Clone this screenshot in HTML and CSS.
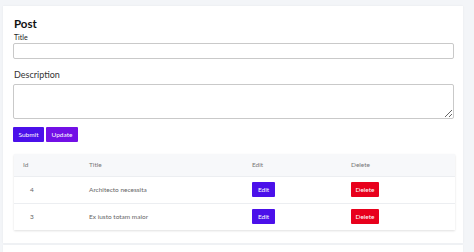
FILE: index.html
```html
<html>
  <head>
    <title>Posts</title>
    <link rel="stylesheet" href="styles.css">
  </head>
  <body>
    <div class="card">
      <h2>Post</h2>
      <form class="post-form">
        <label class="small-label">Title</label>
        <input type="text" class="field">
        <label class="big-label">Description</label>
        <textarea class="field area"></textarea>
        <div class="btn-row">
          <button type="button" class="btn submit">Submit</button>
          <button type="button" class="btn update">Update</button>
        </div>
      </form>
      <table class="posts">
        <thead>
          <tr>
            <th class="c-id">Id</th>
            <th class="c-title">Title</th>
            <th class="c-edit">Edit</th>
            <th class="c-del">Delete</th>
          </tr>
        </thead>
        <tbody>
          <tr>
            <td class="c-id">4</td>
            <td>Architecto necessita</td>
            <td><button class="btn edit">Edit</button></td>
            <td><button class="btn delete">Delete</button></td>
          </tr>
          <tr>
            <td class="c-id">3</td>
            <td>Ex iusto totam maior</td>
            <td><button class="btn edit">Edit</button></td>
            <td><button class="btn delete">Delete</button></td>
          </tr>
        </tbody>
      </table>
    </div>
    <div class="card next"></div>
  </body>
</html>
```

FILE: styles.css
```css
* {
  margin: 0;
  padding: 0;
  box-sizing: border-box;
  font-family: "Lato", "Open Sans", sans-serif;
}

body {
  background: #f3f5f8;
  color: #222;
}

.card {
  background: #fff;
  margin: 6px 11px 0 3px;
  padding: 11px 9px 13px 10px;
  box-shadow: 0 0 2px rgba(0, 0, 0, 0.06);
}

.card.next {
  margin-top: 2px;
  height: 7px;
  padding: 0;
}

h2 {
  font-size: 11.5px;
  font-weight: 700;
  color: #111;
  line-height: 14px;
  margin-left: 1px;
}

.post-form {
  display: flex;
  flex-direction: column;
}

.small-label {
  font-size: 7px;
  color: #222;
  margin-top: 2px;
  margin-left: 1px;
  line-height: 8px;
}

.big-label {
  font-size: 9px;
  color: #333;
  margin-top: 10px;
  margin-left: 1px;
  line-height: 12px;
}

.field {
  border: 1px solid #c9c9c9;
  border-radius: 2px;
  height: 16px;
  margin-top: 2px;
  background: #fff;
}

.area {
  height: 35px;
  margin-top: 3px;
  resize: vertical;
}

.btn-row {
  display: flex;
  gap: 2px;
  margin-top: 8px;
}

.btn {
  border: none;
  color: #fff;
  font-size: 6.5px;
  border-radius: 1px;
  cursor: pointer;
}

.submit {
  background: #4b10ea;
  width: 31px;
  height: 15px;
}

.update {
  background: #7210e6;
  width: 32px;
  height: 15px;
}

.posts {
  width: 441px;
  margin-top: 12px;
  margin-left: 1px;
  border-collapse: collapse;
  box-shadow: 0 1px 2px rgba(0, 0, 0, 0.12);
  font-size: 6.5px;
  color: #666;
}

.posts th {
  background: #f7f8fa;
  font-weight: 400;
  text-align: left;
  height: 22px;
  padding-left: 9px;
  color: #777;
}

.posts td {
  height: 27px;
  padding-left: 9px;
  border-top: 1px solid #eceef1;
}

.posts td.c-id {
  padding-left: 16px;
}

.c-id { width: 66px; }
.c-title { width: 163px; }
.c-edit { width: 99px; }

.edit {
  background: #4b10ea;
  width: 23px;
  height: 15px;
}

.delete {
  background: #e8001c;
  width: 28px;
  height: 15px;
}
```
